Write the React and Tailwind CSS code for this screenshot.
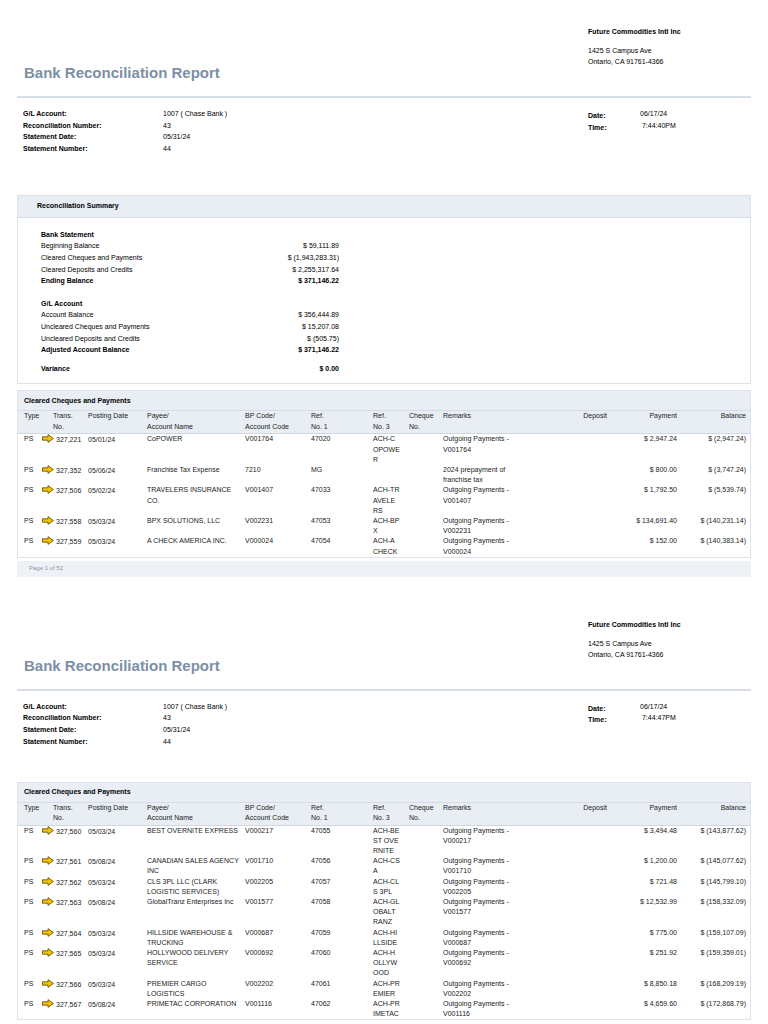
const F = { fontFamily: "'Liberation Sans', Arial, sans-serif" };

const Arrow = () => (
  <svg width="12" height="9" viewBox="0 0 12 9" className="inline-block mr-[2px] align-[-1px]">
    <path d="M0.5 2.8H6V0.6L11.4 4.5L6 8.4V6.2H0.5Z" fill="#f2c200" stroke="#5a4a00" strokeWidth="0.8" />
  </svg>
);

const cols = "grid-cols-[18px_46px_59px_98px_66px_62px_36px_34px_98px_66px_70px_69px]";

const Header = ({ time }) => (
  <div>
    <div className="flex justify-end pr-[18px]">
      <div className="w-[162px] text-[7px] leading-[11px] text-black">
        <div className="font-bold mt-[26px]">Future Commodities Intl Inc</div>
        <div className="mt-[8px]">1425 S Campus Ave</div>
        <div>Ontario, CA 91761-4366</div>
      </div>
    </div>
    <div className="ml-[24px] -mt-[4px] text-[15px] leading-[20px] font-bold text-[#7c8fa6]">Bank Reconciliation Report</div>
    <div className="mx-[17px] mt-[13px] h-[2px] bg-[#d7dde4]" />
    <div className="flex mx-[23px] mt-[10px] text-[7px] leading-[11.7px]">
      <div className="w-[140px] font-bold">
        <div>G/L Account:</div>
        <div>Reconciliation Number:</div>
        <div>Statement Date:</div>
        <div>Statement Number:</div>
      </div>
      <div className="w-[425px]">
        <div>1007 ( Chase Bank )</div>
        <div>43</div>
        <div>05/31/24</div>
        <div>44</div>
      </div>
      <div className="w-[52px] font-bold pt-[2px]">
        <div>Date:</div>
        <div>Time:</div>
      </div>
      <div>
        <div>06/17/24</div>
        <div>&nbsp;{time}</div>
      </div>
    </div>
  </div>
);

const Row = ({ r }) => (
  <div className={`grid ${cols} px-[6px] text-[7px] leading-[10.2px] text-[#222]`}>
    <div>PS</div>
    <div className="whitespace-nowrap"><Arrow />{r[0]}</div>
    <div className="pt-[1px]">{r[1]}</div>
    <div className="pr-[4px]">{r[2]}</div>
    <div>{r[3]}</div>
    <div>{r[4]}</div>
    <div className="w-[27px] break-all">{r[5]}</div>
    <div></div>
    <div className="pr-[14px]">{r[6]}</div>
    <div></div>
    <div className="text-right">{r[7]}</div>
    <div className="text-right">{r[8]}</div>
  </div>
);

const TableHead = () => (
  <>
    <div className="bg-[#e8eef4] px-[6px] h-[20px] flex items-center text-[7px] font-bold border-b border-[#d7dde4]">Cleared Cheques and Payments</div>
    <div className={`grid ${cols} px-[6px] text-[7px] leading-[10.5px] text-[#222] bg-[#e8eef4] pb-[1px] border-b border-[#d0d7df]`}>
      <div>Type</div>
      <div className="pl-[11px]">Trans.<br />No.</div>
      <div>Posting Date</div>
      <div>Payee/<br />Account Name</div>
      <div>BP Code/<br />Account Code</div>
      <div>Ref.<br />No. 1</div>
      <div>Ref.<br />No. 3</div>
      <div>Cheque<br />No.</div>
      <div>Remarks</div>
      <div className="text-right">Deposit</div>
      <div className="text-right">Payment</div>
      <div className="text-right">Balance</div>
    </div>
  </>
);

const rows1 = [
  ["327,221", "05/01/24", "CoPOWER", "V001764", "47020", "ACH-COPOWER", "Outgoing Payments - V001764", "$ 2,947.24", "$ (2,947.24)"],
  ["327,352", "05/06/24", "Franchise Tax Expense", "7210", "MG", "", "2024 prepayment of franchise tax", "$ 800.00", "$ (3,747.24)"],
  ["327,506", "05/02/24", "TRAVELERS INSURANCE CO.", "V001407", "47033", "ACH-TRAVELERS", "Outgoing Payments - V001407", "$ 1,792.50", "$ (5,539.74)"],
  ["327,558", "05/03/24", "BPX SOLUTIONS, LLC", "V002231", "47053", "ACH-BPX", "Outgoing Payments - V002231", "$ 134,691.40", "$ (140,231.14)"],
  ["327,559", "05/03/24", "A CHECK AMERICA INC.", "V000024", "47054", "ACH-A CHECK", "Outgoing Payments - V000024", "$ 152.00", "$ (140,383.14)"],
];

const rows2 = [
  ["327,560", "05/03/24", "BEST OVERNITE EXPRESS", "V000217", "47055", "ACH-BEST OVERNITE", "Outgoing Payments - V000217", "$ 3,494.48", "$ (143,877.62)"],
  ["327,561", "05/08/24", "CANADIAN SALES AGENCY INC", "V001710", "47056", "ACH-CSA", "Outgoing Payments - V001710", "$ 1,200.00", "$ (145,077.62)"],
  ["327,562", "05/03/24", "CLS 3PL LLC (CLARK LOGISTIC SERVICES)", "V002205", "47057", "ACH-CLS 3PL", "Outgoing Payments - V002205", "$ 721.48", "$ (145,799.10)"],
  ["327,563", "05/08/24", "GlobalTranz Enterprises Inc", "V001577", "47058", "ACH-GLOBALTRANZ", "Outgoing Payments - V001577", "$ 12,532.99", "$ (158,332.09)"],
  ["327,564", "05/03/24", "HILLSIDE WAREHOUSE & TRUCKING", "V000687", "47059", "ACH-HILLSIDE", "Outgoing Payments - V000687", "$ 775.00", "$ (159,107.09)"],
  ["327,565", "05/03/24", "HOLLYWOOD DELIVERY SERVICE", "V000692", "47060", "ACH-HOLLYWOOD", "Outgoing Payments - V000692", "$ 251.92", "$ (159,359.01)"],
  ["327,566", "05/03/24", "PREMIER CARGO LOGISTICS", "V002202", "47061", "ACH-PREMIER", "Outgoing Payments - V002202", "$ 8,850.18", "$ (168,209.19)"],
  ["327,567", "05/08/24", "PRIMETAC CORPORATION", "V001116", "47062", "ACH-PRIMETAC", "Outgoing Payments - V001116", "$ 4,659.60", "$ (172,868.79)"],
];

const S = ({ l, v, b }) => (
  <div className={`flex ${b ? "font-bold" : ""}`}>
    <div className="w-[220px]">{l}</div>
    <div className="w-[78px] text-right">{v}</div>
  </div>
);

export default function App() {
  return (
    <div style={F} className="w-[768px] h-[1024px] overflow-hidden bg-white text-black">
      <Header time="7:44:40PM" />
      <div className="mx-[17px] mt-[40px] border border-[#dde3ea]">
        <div className="bg-[#e8eef4] h-[22px] flex items-center px-[19px] text-[7px] font-bold border-b border-[#d7dde4]">Reconciliation Summary</div>
        <div className="px-[23px] pt-[11px] pb-[9px] text-[7px] leading-[11.6px]">
          <div className="font-bold">Bank Statement</div>
          <S l="Beginning Balance" v="$ 59,111.89" />
          <S l="Cleared Cheques and Payments" v="$ (1,943,283.31)" />
          <S l="Cleared Deposits and Credits" v="$ 2,255,317.64" />
          <S l="Ending Balance" v="$ 371,146.22" b />
          <div className="font-bold mt-[11px]">G/L Account</div>
          <S l="Account Balance" v="$ 356,444.89" />
          <S l="Uncleared Cheques and Payments" v="$ 15,207.08" />
          <S l="Uncleared Deposits and Credits" v="$ (505.75)" />
          <S l="Adjusted Account Balance" v="$ 371,146.22" b />
          <div className="mt-[7px]"><S l="Variance" v="$ 0.00" b /></div>
        </div>
      </div>
      <div className="mx-[17px] mt-[6px] border border-[#dde3ea]">
        <TableHead />
        {rows1.map((r) => <Row key={r[0]} r={r} />)}
      </div>
      <div className="mx-[17px] mt-[3px] h-[16px] bg-[#eef1f5] flex items-center px-[12px] text-[6px] text-[#8a97a8]">Page 1 of 52</div>
      <div className="h-[16px]" />
      <Header time="7:44:47PM" />
      <div className="mx-[17px] mt-[34px] border border-[#dde3ea]">
        <TableHead />
        {rows2.map((r) => <Row key={r[0]} r={r} />)}
      </div>
    </div>
  );
}
